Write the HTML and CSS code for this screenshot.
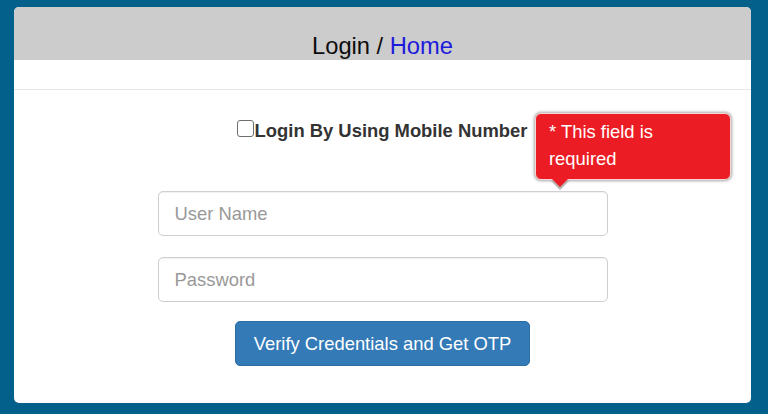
FILE: index.html
```html
<!DOCTYPE html>
<html lang="en">
<head>
<meta charset="utf-8">
<title>Login</title>
<link rel="stylesheet" href="styles.css">
</head>
<body>
<div class="card">
  <div class="card-header">Login / <a class="home" href="#">Home</a></div>
  <div class="card-strip"></div>
  <div class="card-body">
    <label class="mobile-row"><input type="checkbox" class="check"><span>Login By Using Mobile Number</span></label>
    <input class="field first" type="text" placeholder="User Name">
    <input class="field" type="password" placeholder="Password">
    <button class="btn" type="button">Verify Credentials and Get OTP</button>
  </div>
  <div class="tip">* This field is required</div>
</div>
</body>
</html>
```

FILE: styles.css
```css
html, body {
  margin: 0;
  padding: 0;
}
body {
  background: #03608a;
  font-family: "Liberation Sans", Arial, sans-serif;
  width: 768px;
  height: 414px;
  overflow: hidden;
}
.card {
  position: relative;
  margin: 7px 17px 0 14px;
  height: 396px;
  background: #fff;
  border-radius: 5px;
}
.card-header {
  background: #cccccc;
  border-radius: 5px 5px 0 0;
  height: 53px;
  box-sizing: border-box;
  padding-top: 26px;
  line-height: 27px;
  font-size: 23.7px;
  text-align: center;
  color: #0d0d0d;
}
.home {
  color: #1d1adb;
  text-decoration: none;
}
.card-strip {
  height: 29px;
  border-bottom: 1px solid #e6e6e6;
}
.card-body {
  padding-top: 28px;
  display: flex;
  flex-direction: column;
  align-items: center;
}
.mobile-row {
  display: flex;
  align-items: flex-start;
  height: 26px;
  line-height: 26px;
  font-size: 18.4px;
  font-weight: bold;
  color: #333;
  cursor: pointer;
}
.check {
  appearance: none;
  -webkit-appearance: none;
  width: 17px;
  height: 17px;
  margin: 2px 1px 0 -1px;
  border: 1px solid #6e6e6e;
  border-radius: 3px;
  background: #fff;
  box-sizing: border-box;
}
.field {
  width: 450px;
  height: 45px;
  box-sizing: border-box;
  border: 1px solid #cfcfcf;
  border-radius: 5px;
  padding: 0 16px;
  font-family: "Liberation Sans", Arial, sans-serif;
  font-size: 18.4px;
  color: #555;
  background: #fff;
  margin-top: 21px;
  box-shadow: inset 0 1px 1px rgba(0,0,0,.06);
}
.field.first {
  margin-top: 47px;
}
.field::placeholder {
  color: #999;
}
.btn {
  margin-top: 19px;
  width: 295px;
  height: 45px;
  border: 1px solid #2e6da4;
  border-radius: 5px;
  background: #337ab7;
  color: #fff;
  font-family: "Liberation Sans", Arial, sans-serif;
  font-size: 18.4px;
  padding: 0;
}
.tip {
  position: absolute;
  left: 521px;
  top: 106px;
  width: 196px;
  height: 67px;
  box-sizing: border-box;
  padding: 4px 12px 0 13px;
  background: #ec1c24;
  border: 1px solid #f6d6d4;
  border-radius: 6px;
  box-shadow: 0 0 3px 1px rgba(0,0,0,.35);
  color: #fff;
  font-size: 18.4px;
  line-height: 27px;
}
.tip::before {
  content: "";
  position: absolute;
  left: 14px;
  bottom: -11px;
  border-left: 10px solid transparent;
  border-right: 10px solid transparent;
  border-top: 10px solid #b9b2b2;
}
.tip::after {
  content: "";
  position: absolute;
  left: 16px;
  bottom: -8px;
  border-left: 8px solid transparent;
  border-right: 8px solid transparent;
  border-top: 8px solid #ec1c24;
}
```
